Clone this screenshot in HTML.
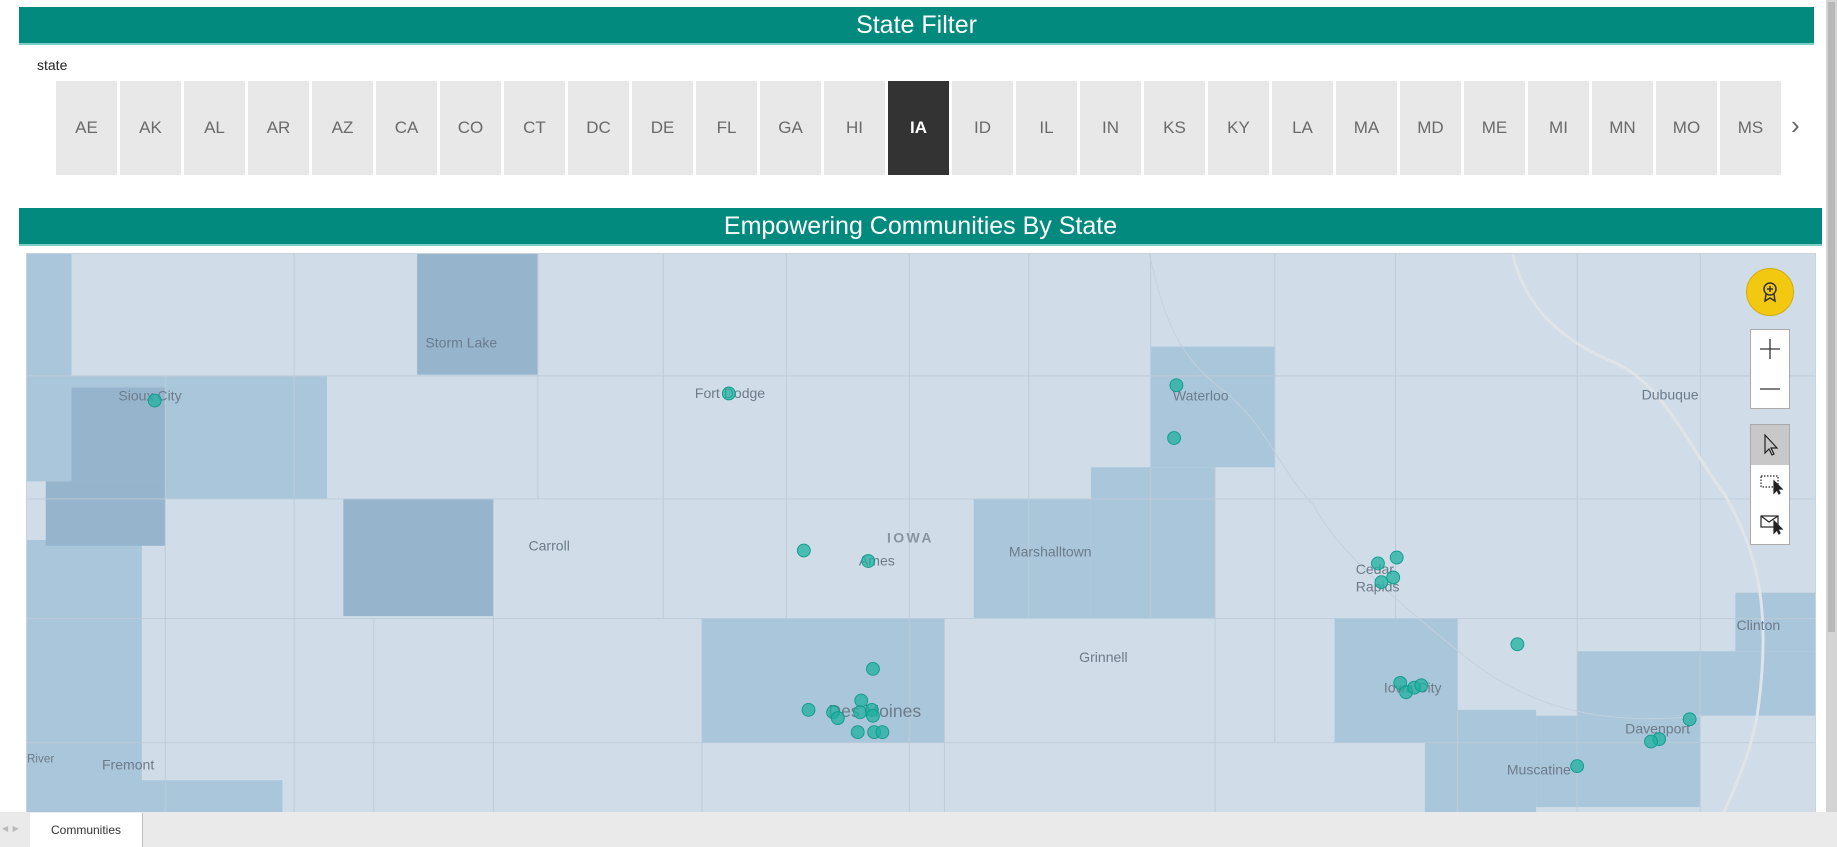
<!DOCTYPE html>
<html><head><meta charset="utf-8"><style>
body{margin:0;width:1837px;height:847px;overflow:hidden;background:#fff;position:relative;font-family:"Liberation Sans",sans-serif}
.hdr{position:absolute;background:#038a7e;color:#fff;text-align:center;font-size:25px;border-bottom:2px solid #7ccfc6;box-sizing:border-box}
.tile{position:absolute;top:81px;height:94px;width:61px;background:#e8e8e8;color:#6a6a6a;font-size:17px;display:flex;align-items:center;justify-content:center}
.tile.on{background:#333;color:#fff;font-weight:bold}
</style></head><body>
<div class="hdr" style="left:19px;top:7px;width:1795px;height:38px;line-height:36px">State Filter</div>
<div style="position:absolute;left:37px;top:57px;font-size:14px;color:#222">state</div>
<div id="tiles"></div>
<div style="position:absolute;left:1791px;top:110px;font-size:26px;color:#666;font-weight:100">&#8250;</div>
<div class="hdr" style="left:19px;top:208px;width:1803px;height:38px;line-height:36px">Empowering Communities By State</div>
<div style="position:absolute;left:1826px;top:0;width:11px;height:812px;background:#d4d4d4"></div>
<div style="position:absolute;left:1828px;top:2px;width:7px;height:630px;background:#b8b8b8"></div>
<svg style="position:absolute;left:26px;top:253px;border:1px solid #c9d3dc" width="1788" height="559" viewBox="22 216 1526 477" preserveAspectRatio="none">
<rect x="22" y="216" width="1526" height="477" fill="#d0dde8"/>
<g fill="#aac6db">
<rect x="22" y="216" width="38" height="194"/>
<rect x="60" y="320" width="218" height="105"/>
<rect x="22" y="460" width="98" height="233"/>
<rect x="981" y="295" width="106" height="103"/>
<rect x="930" y="398" width="106" height="129"/>
<rect x="830" y="425" width="100" height="102"/>
<rect x="598" y="527" width="207" height="106"/>
<rect x="1138" y="527" width="105" height="106"/>
<rect x="1215" y="605" width="95" height="88"/>
<rect x="1345" y="555" width="203" height="55"/>
<rect x="1310" y="610" width="140" height="78"/>
<rect x="1480" y="505" width="68" height="50"/>
<rect x="100" y="665" width="140" height="28"/>
</g>
<g fill="#96b4cc">
<rect x="355" y="216" width="103" height="103"/>
<rect x="60" y="330" width="80" height="80"/>
<rect x="38" y="410" width="102" height="55"/>
<rect x="292" y="425" width="128" height="100"/>
</g>
<g stroke="#bccbd8" stroke-width="0.8" fill="none">
<path d="M22 320H1548M22 425H1548M22 527H1548M22 633H1548M250 216V693M458 216V425M565 216V527M670 216V527M775 216V693M877 216V527M981 216V527M1087 216V633M1190 216V527M1243 527V693M1345 216V693M1450 216V693M140 320V693M420 425V693M318 527V693M598 527V693M805 527V693M1036 398V693"/>
<path d="M980 216C990 260 1000 300 1040 330C1080 360 1090 400 1120 430C1140 470 1200 520 1250 560C1300 600 1360 620 1450 610" stroke="#c4d0db"/>
</g>
<path d="M1290 216C1300 260 1330 290 1380 310C1420 330 1440 380 1470 420C1500 470 1510 520 1500 600C1495 640 1480 670 1470 693" stroke="#dfe4e9" stroke-width="2.5" fill="none"/>
<g font-size="12" fill="#6c7b8a" font-family="Liberation Sans,sans-serif">
<text x="362" y="296">Storm Lake</text><text x="100" y="341">Sioux City</text><text x="592" y="339">Fort Dodge</text>
<text x="1000" y="341">Waterloo</text><text x="1400" y="340">Dubuque</text><text x="450" y="469">Carroll</text>
<text x="756" y="462" font-weight="bold" letter-spacing="2" fill="#8795a3">IOWA</text><text x="732" y="482">Ames</text>
<text x="860" y="474">Marshalltown</text><text x="1156" y="489">Cedar</text><text x="1156" y="504">Rapids</text>
<text x="920" y="564">Grinnell</text><text x="706" y="611" font-size="15">Des Moines</text><text x="1180" y="590">Iowa City</text>
<text x="1481" y="537">Clinton</text><text x="1386" y="625">Davenport</text><text x="1285" y="660">Muscatine</text>
<text x="86" y="656">Fremont</text><text x="22" y="650" font-size="10">River</text>
</g>
<g fill="#1fb09f" fill-opacity="0.75" stroke="#0f9b8b" stroke-width="0.8">
<circle cx="131" cy="341" r="5.5"/><circle cx="621" cy="335" r="5.5"/><circle cx="1003" cy="328" r="5.5"/><circle cx="1001" cy="373" r="5.5"/>
<circle cx="685" cy="469" r="5.5"/><circle cx="740" cy="478" r="5.5"/><circle cx="1175" cy="480" r="5.5"/><circle cx="1191" cy="475" r="5.5"/>
<circle cx="1188" cy="492" r="5.5"/><circle cx="1178" cy="496" r="5.5"/><circle cx="1294" cy="549" r="5.5"/><circle cx="744" cy="570" r="5.5"/>
<circle cx="689" cy="605" r="5.5"/><circle cx="710" cy="607" r="5.5"/><circle cx="714" cy="612" r="5.5"/><circle cx="734" cy="597" r="5.5"/>
<circle cx="733" cy="607" r="5.5"/><circle cx="743" cy="605" r="5.5"/><circle cx="744" cy="610" r="5.5"/><circle cx="731" cy="624" r="5.5"/>
<circle cx="745" cy="624" r="5.5"/><circle cx="752" cy="624" r="5.5"/><circle cx="1194" cy="582" r="5.5"/><circle cx="1199" cy="590" r="5.5"/>
<circle cx="1206" cy="586" r="5.5"/><circle cx="1212" cy="584" r="5.5"/><circle cx="1345" cy="653" r="5.5"/><circle cx="1441" cy="613" r="5.5"/>
<circle cx="1415" cy="630" r="5.5"/><circle cx="1408" cy="632" r="5.5"/>
</g>
</svg>
<div style="position:absolute;left:1746px;top:268px;width:48px;height:48px;border-radius:50%;background:#f2c811;border:1px solid #d4ac0d;box-sizing:border-box"></div>
<svg style="position:absolute;left:1758px;top:280px" width="24" height="24" viewBox="0 0 24 24" fill="none" stroke="#333" stroke-width="1.5"><circle cx="12" cy="9" r="6"/><path d="M12 6v6M9 9h6M8 14l-1 7 5-3 5 3-1-7"/></svg>
<div style="position:absolute;left:1750px;top:329px;width:40px;height:80px;background:#fff;border:1px solid #aaa;box-sizing:border-box"></div>
<svg style="position:absolute;left:1750px;top:329px" width="40" height="80"><path d="M20 10v20M10 20h20M10 60h20" stroke="#333" stroke-width="1.3"/></svg>
<div style="position:absolute;left:1750px;top:424px;width:40px;height:121px;background:#fff;border:1px solid #aaa;box-sizing:border-box"></div>
<div style="position:absolute;left:1751px;top:425px;width:38px;height:40px;background:#c8c8c8"></div>
<svg style="position:absolute;left:1750px;top:424px" width="40" height="121" fill="none" stroke="#222" stroke-width="1.2">
<path d="M15 11v18l4-4 3 6 2-1-3-6h6z"/>
<rect x="11" y="52" width="17" height="11" stroke-dasharray="1.5 1.5"/><path d="M24 57v12l3-3 2 4 1-1-2-4h4z" fill="#222"/>
<rect x="11" y="92" width="17" height="11"/><path d="M11 92l8 6 9-6" /><path d="M24 97v12l3-3 2 4 1-1-2-4h4z" fill="#222"/>
</svg>
<div style="position:absolute;left:0;top:812px;width:1837px;height:35px;background:#eaeaea"></div>
<div style="position:absolute;left:2px;top:824px;font-size:8px;color:#bbb">&#9664;&nbsp;&nbsp;&#9654;</div>
<div style="position:absolute;left:30px;top:813px;width:112px;height:34px;background:#fff;border-right:1px solid #bbb;font-size:12px;color:#333;text-align:center;line-height:34px">Communities</div>
<script>
var s="AE AK AL AR AZ CA CO CT DC DE FL GA HI IA ID IL IN KS KY LA MA MD ME MI MN MO MS".split(" "),h="";
s.forEach(function(t,i){h+='<div class="tile'+(t=="IA"?" on":"")+'" style="left:'+(56+i*64)+'px">'+t+'</div>';});
document.getElementById("tiles").innerHTML=h;
</script>
</body></html>
